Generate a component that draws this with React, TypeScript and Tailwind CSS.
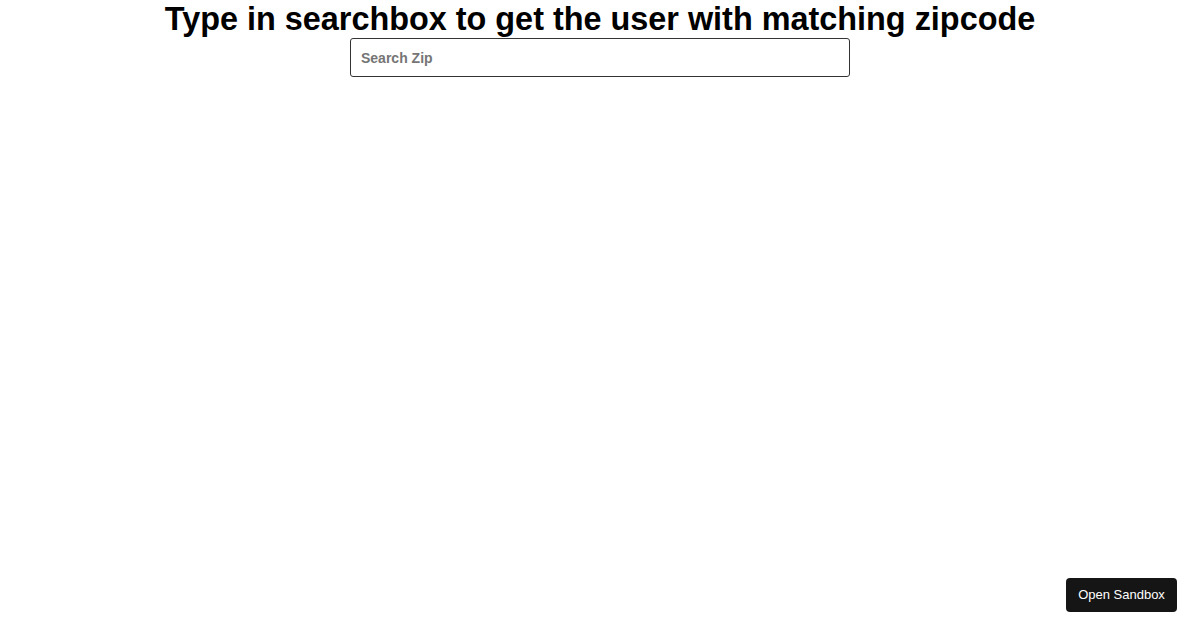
import React from "react";

export default function App() {
  return (
    <div className="w-[1200px] h-[630px] bg-white relative" style={{ fontFamily: '"Liberation Sans", Arial, sans-serif' }}>
      <div className="flex flex-col items-center">
        <h1 className="text-[32.4px] font-bold leading-[38px] text-black m-0">
          Type in searchbox to get the user with matching zipcode
        </h1>
        <input
          type="text"
          placeholder="Search Zip"
          className="w-[500px] h-[39px] border border-[#333] rounded-[3px] px-[10px] text-[14px] font-bold placeholder:text-[#757575] outline-none"
        />
      </div>
      <button className="absolute right-[23px] bottom-[18px] w-[111px] h-[34px] bg-[#151515] text-white text-[13px] rounded-[4px] flex items-center justify-center">
        Open Sandbox
      </button>
    </div>
  );
}
